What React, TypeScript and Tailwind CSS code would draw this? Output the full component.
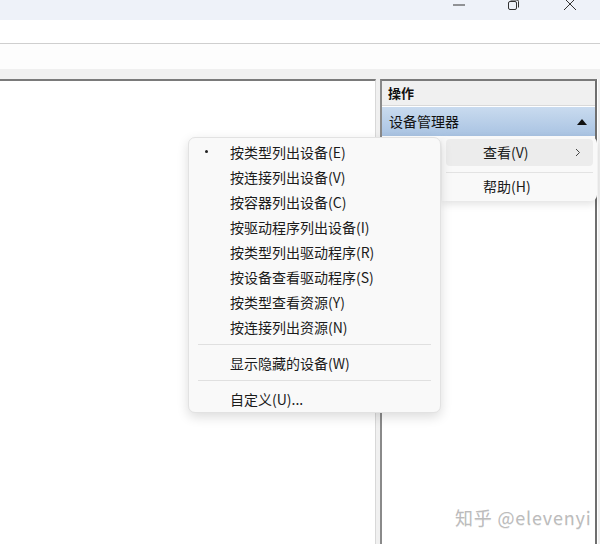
import React from "react";

const items = [
  "按类型列出设备(E)",
  "按连接列出设备(V)",
  "按容器列出设备(C)",
  "按驱动程序列出设备(I)",
  "按类型列出驱动程序(R)",
  "按设备查看驱动程序(S)",
  "按类型查看资源(Y)",
  "按连接列出资源(N)",
];

const font = { fontFamily: '"Noto Sans CJK SC", "Noto Sans", "Liberation Sans", sans-serif' };

function Item({ text, bullet }: { text: string; bullet?: boolean }) {
  return (
    <div className="h-[25px] flex items-center text-[14px] text-[#1b1b1b] leading-none">
      <div className="w-[41px] flex justify-end pr-[22px]">
        {bullet && <div className="w-[3px] h-[3px] rounded-full bg-[#222]" />}
      </div>
      <span>{text}</span>
    </div>
  );
}

export default function App() {
  return (
    <div className="w-[600px] h-[544px] overflow-hidden relative bg-white flex flex-col" style={font}>
      {/* title bar */}
      <div className="h-[20px] bg-[#eef2f9] flex justify-end items-start shrink-0">
        <svg width="14" height="12" viewBox="0 0 14 12" className="mr-[40px] mt-0">
          <line x1="1" y1="5" x2="13" y2="5" stroke="#333" strokeWidth="1" />
        </svg>
        <svg width="14" height="12" viewBox="0 0 14 12" className="mr-[42px] -mt-[1px]">
          <rect x="2.5" y="2.5" width="8" height="8" rx="1.5" fill="none" stroke="#333" strokeWidth="1" />
          <path d="M4.5 1 H11 a1.5 1.5 0 0 1 1.5 1.5 V8.5" fill="none" stroke="#333" strokeWidth="1" />
        </svg>
        <svg width="16" height="12" viewBox="0 0 16 12" className="mr-[22px] -mt-[2px]">
          <path d="M2 0 L14 12 M14 0 L2 12" stroke="#333" strokeWidth="1" />
        </svg>
      </div>
      {/* toolbar area */}
      <div className="h-[24px] bg-white border-b border-[#cfcfcf] shrink-0" />
      <div className="h-[25px] bg-[#fdfdfd] shrink-0" />
      <div className="h-[10px] bg-[#f0f0f0] shrink-0" />
      {/* content */}
      <div className="flex-1 flex bg-[#f0f0f0]">
        <div className="w-[376px] bg-white border-t-[2px] border-t-[#7a7a7a] border-r border-r-[#d8d8d8]" />
        <div className="w-[4px]" />
        <div className="w-[217px] bg-white border-t-[2px] border-t-[#7a7a7a] border-l-[2px] border-l-[#8a8a8a] border-r-[2px] border-r-[#6f6f6f] flex flex-col">
          <div className="h-[25px] bg-[#f0f0f0] border-b border-[#d9d9d9] flex items-center pl-[6px] text-[13px] font-bold text-[#111]">
            操作
          </div>
          <div className="h-[29px] mt-[1px] bg-gradient-to-b from-[#c9dbef] to-[#a9c3e2] flex items-center justify-between pl-[7px] pr-[8px] text-[14px] text-[#111]">
            <span>设备管理器</span>
            <svg width="10" height="6" viewBox="0 0 10 6">
              <path d="M0 6 L5 0 L10 6 Z" fill="#111" />
            </svg>
          </div>
        </div>
        <div className="w-[1px] bg-white" />
      </div>

      {/* context menu 2 (right) */}
      <div className="absolute left-[442px] top-[137px] w-[155px] h-[64px] bg-[#f9f9f9] rounded-r-[6px] shadow-[0_3px_8px_rgba(0,0,0,0.12)] pt-[2px] px-[4px]">
        <div className="h-[27px] bg-[#ececec] rounded-[4px] flex items-center justify-between pl-[37px] pr-[12px] text-[14px] text-[#1b1b1b]">
          <span className="-mt-[1px]">查看(V)</span>
          <svg width="6" height="9" viewBox="0 0 6 9">
            <path d="M1 1 L4.5 4.5 L1 8" fill="none" stroke="#444" strokeWidth="1" />
          </svg>
        </div>
        <div className="h-[1px] bg-[#e3e3e3] mt-[6px]" />
        <div className="h-[26px] flex items-center pl-[37px] text-[14px] text-[#1b1b1b]">帮助(H)</div>
      </div>

      {/* context menu 1 */}
      <div className="absolute left-[188px] top-[137px] w-[253px] h-[276px] bg-[#f9f9f9] rounded-[7px] border border-[#e2e2e2] shadow-[0_4px_12px_rgba(0,0,0,0.14)] pt-[1px]">
        {items.map((t, i) => (
          <Item key={t} text={t} bullet={i === 0} />
        ))}
        <div className="h-[1px] bg-[#e0e0e0] mx-[9px] mt-[5px] mb-[5px]" />
        <Item text="显示隐藏的设备(W)" />
        <div className="h-[1px] bg-[#e0e0e0] mx-[9px] mt-[5px] mb-[5px]" />
        <Item text="自定义(U)..." />
      </div>

      {/* watermark */}
      <div className="absolute left-[455px] top-[504px] text-[18px] text-[#bcbcbc] tracking-[0.8px]" style={{ textShadow: "0 1px 0 rgba(0,0,0,0.08)" }}>
        知乎 @elevenyi
      </div>
    </div>
  );
}
